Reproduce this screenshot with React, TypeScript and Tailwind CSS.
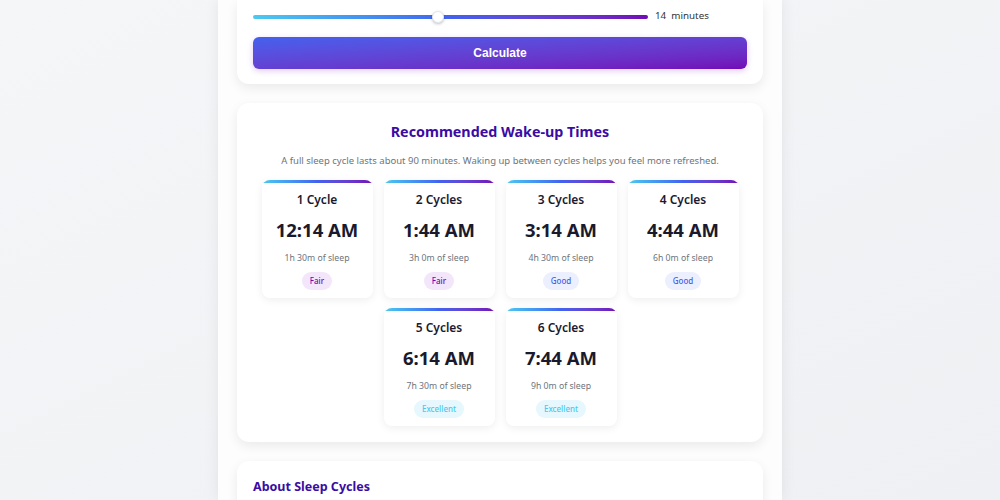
const cycles = [
  { label: "1 Cycle", time: "12:14 AM", sleep: "1h 30m of sleep", q: "Fair" },
  { label: "2 Cycles", time: "1:44 AM", sleep: "3h 0m of sleep", q: "Fair" },
  { label: "3 Cycles", time: "3:14 AM", sleep: "4h 30m of sleep", q: "Good" },
  { label: "4 Cycles", time: "4:44 AM", sleep: "6h 0m of sleep", q: "Good" },
  { label: "5 Cycles", time: "6:14 AM", sleep: "7h 30m of sleep", q: "Excellent" },
  { label: "6 Cycles", time: "7:44 AM", sleep: "9h 0m of sleep", q: "Excellent" },
];

const badge: Record<string, string> = {
  Fair: "bg-[#f3e6fb] text-[#7209b7]",
  Good: "bg-[#eceffd] text-[#4361ee]",
  Excellent: "bg-[#e6f7fd] text-[#4cc9f0]",
};

function CycleCard({ c }: { c: (typeof cycles)[number] }) {
  return (
    <div className="w-[111px] overflow-hidden rounded-lg bg-white shadow-[0_2px_8px_rgba(0,0,0,0.07)]">
      <div className="h-[3px] bg-gradient-to-r from-[#4cc9f0] via-[#4361ee] to-[#7209b7]" />
      <div className="flex flex-col items-center px-2 pb-[8px] pt-[8px]">
        <div className="text-[12px] font-semibold leading-[18px] text-[#1a1a2e]">{c.label}</div>
        <div className="mt-[7px] text-[18.5px] font-bold leading-[28px] text-[#1a1a2e]">{c.time}</div>
        <div className="mt-[7px] text-[8.7px] leading-[14px] text-[#6c757d]">{c.sleep}</div>
        <div className={`mt-[7px] flex h-[18px] items-center rounded-full px-2 text-[8px] font-medium ${badge[c.q]}`}>
          {c.q}
        </div>
      </div>
    </div>
  );
}

export default function App() {
  return (
    <div className="min-h-[500px] bg-gradient-to-br from-[#f5f6f8] to-[#eef0f3] font-['Noto_Sans',sans-serif]">
      <div className="mx-auto h-[500px] w-[564px] overflow-hidden bg-[#fdfdfd] px-[19px] shadow-[0_0_14px_rgba(0,0,0,0.07)]">
        {/* calculator card (scrolled) */}
        <div className="rounded-b-xl bg-white px-4 pb-[15px] pt-[10px] shadow-[0_4px_12px_rgba(0,0,0,0.08)]">
          <div className="flex h-[12px] items-center pt-[1px]">
            <div className="relative h-[4px] w-[395px] rounded-full bg-gradient-to-r from-[#4cc9f0] via-[#4361ee] to-[#7209b7]">
              <div className="absolute left-[179px] top-[-4px] h-[12px] w-[12px] rounded-full border border-[#e5e7eb] bg-white shadow-[0_1px_3px_rgba(0,0,0,0.25)]" />
            </div>
            <span className="ml-[7px] text-[9.8px] text-[#333]">14&nbsp;&nbsp;minutes</span>
          </div>
          <button className="mt-[15px] flex h-[32px] w-full items-center justify-center rounded-md bg-gradient-to-br from-[#4361ee] to-[#7209b7] font-['Liberation_Sans',sans-serif] text-[12px] font-bold text-white shadow-[0_2px_6px_rgba(114,9,183,0.2)]">
            Calculate
          </button>
        </div>

        {/* results card */}
        <div className="mt-[19px] rounded-xl bg-white px-4 pb-4 pt-[19px] shadow-[0_4px_12px_rgba(0,0,0,0.08)]">
          <h2 className="text-center text-[14.3px] font-bold leading-[20px] text-[#3a0ca3]">Recommended Wake-up Times</h2>
          <p className="mt-[11px] text-center text-[9.5px] leading-[16px] text-[#6c757d]">
            A full sleep cycle lasts about 90 minutes. Waking up between cycles helps you feel more refreshed.
          </p>
          <div className="mx-auto mt-[11px] flex w-[480px] flex-wrap justify-center gap-x-[11px] gap-y-[10px]">
            {cycles.map((c) => (
              <CycleCard key={c.label} c={c} />
            ))}
          </div>
        </div>

        {/* about card */}
        <div className="mt-[19px] rounded-xl bg-white px-4 pt-[17px] shadow-[0_4px_12px_rgba(0,0,0,0.08)]">
          <h3 className="text-[12.5px] font-bold leading-[18px] text-[#3a0ca3]">About Sleep Cycles</h3>
          <div className="h-10" />
        </div>
      </div>
    </div>
  );
}
